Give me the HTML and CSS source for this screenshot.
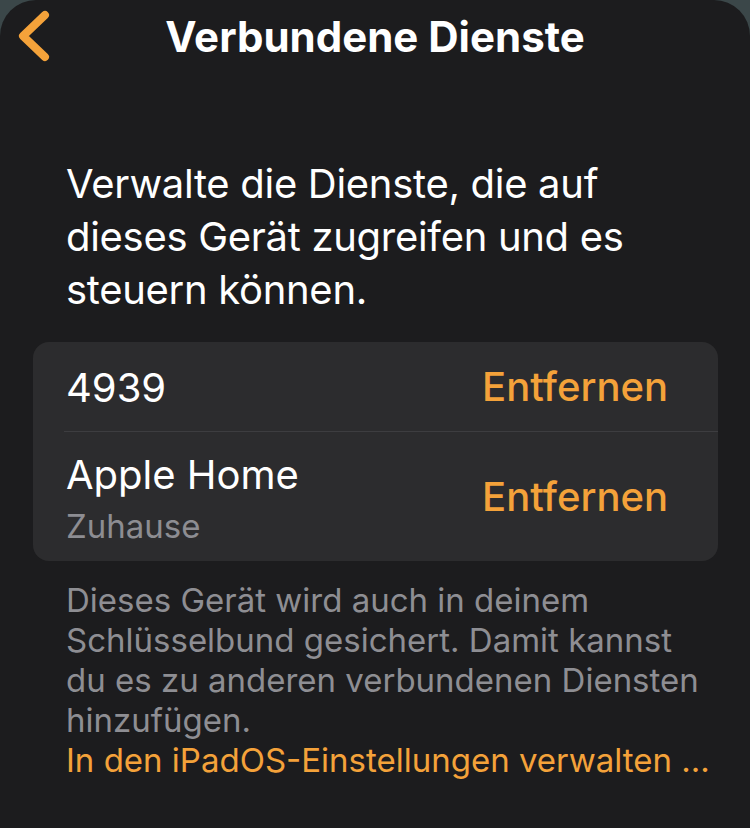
FILE: index.html
```html
<!DOCTYPE html>
<html lang="de">
    <head>
        <meta charset="UTF-8">
        <meta name="viewport" content="width=device-width, initial-scale=1.0">
        <title>Verbundene Dienste</title>
        <link rel="stylesheet" href="styles.css">
    </head>
    <body>
        <div class="sheet">
            <header class="nav">
                <button class="back" aria-label="Zurück">
                    <svg width="60" height="72" viewBox="0 0 60 72">
                        <path d="M45 15 L23 36 L45 57" fill="none" stroke="#f4a23a" stroke-width="8" stroke-linecap="round" stroke-linejoin="round"/>
                    </svg>
                </button>
                <h1 class="title">Verbundene Dienste</h1>
                <span></span>
            </header>

            <p class="intro">Verwalte die Dienste, die auf dieses Gerät zugreifen und es steuern können.</p>

            <ul class="services">
                <li class="service">
                    <div class="service-info">
                        <span class="service-name">4939</span>
                    </div>
                    <button class="remove">Entfernen</button>
                </li>
                <li class="service service-tall">
                    <div class="service-info">
                        <span class="service-name">Apple Home</span>
                        <span class="service-home">Zuhause</span>
                    </div>
                    <button class="remove">Entfernen</button>
                </li>
            </ul>

            <p class="footnote">
                Dieses Gerät wird auch in deinem Schlüsselbund gesichert. Damit kannst du es zu anderen verbundenen Diensten hinzufügen.
                <a class="settings-link" href="#">In den iPadOS-Einstellungen verwalten …</a>
            </p>
        </div>
    </body>
</html>
```

FILE: styles.css
```css
body {
    margin: 0;
    background: #3b4749;
    font-family: Inter, "Noto Sans", sans-serif;
    color: #ffffff;
}

.sheet {
    min-height: 828px;
    background: #1c1c1e;
    border-radius: 36px 36px 0 0;
    overflow: hidden;
}

.nav {
    display: grid;
    grid-template-columns: 1fr auto 1fr;
    align-items: center;
    height: 72px;
}

.back {
    justify-self: start;
    background: none;
    border: none;
    padding: 0;
    height: 72px;
    display: flex;
    align-items: center;
}

.title {
    margin: 0;
    font-size: 42px;
    font-weight: 700;
}

.intro {
    margin: 85px 66px 0 66px;
    font-size: 40px;
    line-height: 53px;
    letter-spacing: -0.3px;
}

.services {
    list-style: none;
    margin: 26px 32px 0 33px;
    padding: 0;
    background: #2c2c2e;
    border-radius: 16px;
}

.service {
    display: flex;
    align-items: center;
    justify-content: space-between;
    margin-left: 31px;
    padding: 0 50px 0 2px;
    height: 89px;
}

.service + .service {
    border-top: 1px solid #3d3d40;
}

.service-tall {
    height: 129px;
}

.service-info {
    display: flex;
    flex-direction: column;
    padding-top: 3px;
}

.service-name {
    font-size: 40px;
    line-height: 48px;
}

.service-home {
    font-size: 33px;
    line-height: 40px;
    color: #8d8d92;
    margin-top: 7px;
}

.remove {
    background: none;
    border: none;
    padding: 0;
    font-family: inherit;
    font-size: 40px;
    font-weight: 500;
    color: #f4a23a;
}

.footnote {
    margin: 19px 30px 0 66px;
    font-size: 33px;
    line-height: 40px;
    color: #8e8e93;
}

.settings-link {
    display: block;
    color: #f4a23a;
    text-decoration: none;
}
```
